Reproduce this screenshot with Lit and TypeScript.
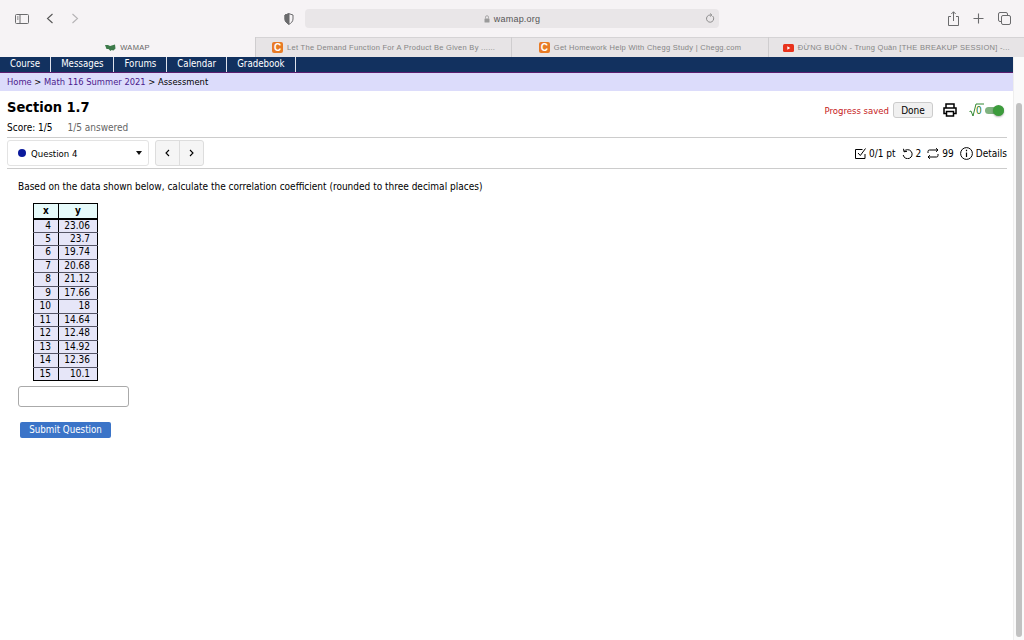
import { LitElement, css, html, svg } from "lit";
import { customElement } from "lit/decorators.js";

const ROWS: [number, string][] = [
  [4, "23.06"],
  [5, "23.7"],
  [6, "19.74"],
  [7, "20.68"],
  [8, "21.12"],
  [9, "17.66"],
  [10, "18"],
  [11, "14.64"],
  [12, "12.48"],
  [13, "14.92"],
  [14, "12.36"],
  [15, "10.1"],
];

const NAV = ["Course", "Messages", "Forums", "Calendar", "Gradebook"];

const icon = (w: number, h: number, body: unknown, cls = "") => html`<svg
  class=${cls}
  width=${w}
  height=${h}
  viewBox="0 0 ${w} ${h}"
  fill="none"
  stroke="currentColor"
>
  ${body}
</svg>`;

const cheggIcon = () => html`<span class="chegg">C</span>`;

@customElement("app-root")
export class AppRoot extends LitElement {
  private renderToolbar() {
    return html`
      <div class="toolbar">
        <div class="tool-left">
          ${icon(
            14,
            10,
            svg`<rect x=".5" y=".5" width="13" height="9" rx="1"/><path d="M5 .5v9M2 3h1.500M2 5h1.500"/>`,
            "sidebar",
          )}
          ${icon(8, 11, svg`<path d="M6.500 1 1.500 5.500l5 4.500" stroke-width="1.100"/>`, "back")}
          ${icon(8, 11, svg`<path d="M1.500 1l5 4.500-5 4.500" stroke-width="1.100"/>`, "forward")}
        </div>
        ${icon(
          10,
          12,
          svg`<path d="M5 .7 9 2v4c0 2.500-2 4.300-4 5.300C3 10.300 1 8.500 1 6V2z" stroke-width="1"/><path d="M5 .7 1 2v4c0 2.500 2 4.300 4 5.300z" fill="currentColor"/>`,
          "shield",
        )}
        <div class="url">
          <span class="url-text">
            ${icon(
              6,
              8,
              svg`<rect x=".5" y="3.500" width="5" height="4" rx=".6" fill="currentColor" stroke="none"/><path d="M1.500 3.500V2.200a1.500 1.500 0 0 1 3 0v1.300" stroke-width=".8"/>`,
            )}
            wamap.org
          </span>
          ${icon(
            10,
            11,
            svg`<path d="M7.600 3A3.600 3.600 0 1 1 5 2H6.500M5.200.5 6.800 2 5.200 3.500" stroke-width=".8"/>`,
            "reload",
          )}
        </div>
        <div class="tool-right">
          ${icon(
            11,
            15,
            svg`<path d="M3 5.500H.5v9h10v-9H8M5.500 10V.8M3.300 3 5.500.8 7.700 3"/>`,
          )}
          ${icon(11, 11, svg`<path d="M5.500.5v10M.5 5.500h10" stroke-width="1.100"/>`)}
          ${icon(
            13,
            13,
            svg`<rect x="3.500" y="3.500" width="9" height="9" rx="1.500"/><path d="M3.500 9.500H2A1.500 1.500 0 0 1 .5 8V2A1.500 1.500 0 0 1 2 .5h6A1.500 1.500 0 0 1 9.500 2v1.500"/>`,
          )}
        </div>
      </div>
    `;
  }

  private renderTabs() {
    return html`
      <div class="tabs">
        <div class="tab active">
          <svg class="fav" width="11" height="8" viewBox="0 0 11 8">
            <path d="M0 1h3l2 1 5-1.500.5 4-2 2-2-.5-1 1-2-2-2 0z" fill="#3d7a4a" />
          </svg>
          <span>WAMAP</span>
        </div>
        <div class="tab">
          ${cheggIcon()}<span>Let The Demand Function For A Product Be Given By ......</span>
        </div>
        <div class="tab">
          ${cheggIcon()}<span>Get Homework Help With Chegg Study | Chegg.com</span>
        </div>
        <div class="tab">
          <svg class="fav" width="11" height="8" viewBox="0 0 11 8">
            <rect width="11" height="8" rx="1.500" fill="#e8321c" />
            <path d="M4.300 2.200v3.600l3-1.800z" fill="#fff" />
          </svg>
          <span>ĐỪNG BUỒN - Trung Quân [THE BREAKUP SESSION] -...</span>
        </div>
      </div>
    `;
  }

  private renderTable() {
    return html`
      <table>
        <thead>
          <tr><th>x</th><th>y</th></tr>
        </thead>
        <tbody>
          ${ROWS.map(
            ([x, y]) => html`<tr><td>${x}</td><td>${y}</td></tr>`,
          )}
        </tbody>
      </table>
    `;
  }

  render() {
    return html`
      ${this.renderToolbar()} ${this.renderTabs()}
      <div class="viewport">
        <div class="page">
          <nav>
            ${NAV.map((n) => html`<span class="nav-item">${n}</span>`)}
          </nav>
          <div class="crumbs">
            <span class="link">Home</span> &gt;
            <span class="link">Math 116 Summer 2021</span> &gt; Assessment
          </div>
          <div class="head">
            <div>
              <h1>Section 1.7</h1>
              <div class="score">Score: 1/5 <span class="answered">1/5 answered</span></div>
            </div>
            <div class="head-right">
              <span class="saved">Progress saved</span>
              <span class="done">Done</span>
              ${icon(
                14,
                14,
                svg`<path d="M3 5V1h8v4M3 10.500H1V5h12v5.500h-2" stroke-width="1.500"/><rect x="3.500" y="8.500" width="7" height="4.500" stroke-width="1.500"/>`,
                "printer",
              )}
              <span class="sqrt">
                ${icon(
                  15,
                  14,
                  svg`<path d="M.5 8.500 2 8l2 5 3-12h8" stroke-width=".9"/>`,
                )}
                <span class="zero">0</span>
              </span>
              <span class="switch"><span class="knob"></span></span>
            </div>
          </div>
          <div class="qbar">
            <div class="select">
              <span class="dot"></span>
              <span class="qname">Question 4</span>
              <span class="caret"></span>
            </div>
            <div class="pager">
              <span class="pg">${icon(5, 8, svg`<path d="M4 1 1 4l3 3" stroke-width="1.100"/>`)}</span>
              <span class="pg">${icon(5, 8, svg`<path d="M1 1l3 3-3 3" stroke-width="1.100"/>`)}</span>
            </div>
            <div class="stats">
              <span class="stat">
                ${icon(
                  11,
                  11,
                  svg`<path d="M10 6v4.500H.5V1.500h7" /><path d="M3 5l2.300 2.500L10.500.5"/>`,
                )}
                0/1 pt
              </span>
              <span class="stat">
                ${icon(
                  11,
                  11,
                  svg`<path d="M2 3.500A4.500 4.500 0 1 1 1.200 7M1.500.8 2 3.800 5 3.300"/>`,
                )}
                2
              </span>
              <span class="stat">
                ${icon(
                  12,
                  11,
                  svg`<path d="M1 5V3.500A1.500 1.500 0 0 1 2.500 2H11M9 .2 11 2 9 3.800M11 6v1.500A1.500 1.500 0 0 1 9.500 9H1M3 7.200 1 9l2 1.800"/>`,
                )}
                99
              </span>
              <span class="stat details">
                ${icon(
                  13,
                  13,
                  svg`<circle cx="6.500" cy="6.500" r="5.900"/><path d="M6.500 5.500v4.500M6.500 2.800v1.400" stroke-width="1.200"/>`,
                )}
                Details
              </span>
            </div>
          </div>
          <div class="question">
            <p>
              Based on the data shown below, calculate the correlation
              coefficient (rounded to three decimal places)
            </p>
            ${this.renderTable()}
            <div class="answer"></div>
            <span class="submit">Submit Question</span>
          </div>
        </div>
        <div class="scrollbar"><div class="thumb"></div></div>
      </div>
    `;
  }

  static styles = css`
    :host {
      display: block;
      width: 1024px;
      height: 640px;
      overflow: hidden;
      background: #fff;
      font-family: "DejaVu Sans Condensed", "DejaVu Sans", sans-serif;
      font-stretch: condensed;
      color: #000;
    }

    svg {
      display: block;
      flex: none;
    }

    .toolbar {
      height: 37px;
      background: #f6f3f5;
      display: flex;
      align-items: center;
      color: #6b6b6d;
      position: relative;
    }

    .tool-left {
      display: flex;
      align-items: center;
      padding-left: 15px;
      width: 284px;
      box-sizing: border-box;
    }

    .back {
      margin-left: 17px;
      color: #555;
    }

    .forward {
      margin-left: 17px;
      color: #b5b3b5;
    }

    .shield {
      color: #6a6a6c;
    }

    .url {
      margin-left: 11px;
      width: 414px;
      height: 19px;
      background: #e9e6e8;
      border-radius: 4px;
      display: flex;
      align-items: center;
      justify-content: center;
      position: relative;
    }

    .url-text {
      display: flex;
      align-items: center;
      gap: 4px;
      color: #555;
      font: 9px "Liberation Sans", sans-serif;
      letter-spacing: 0.2px;
    }

    .url-text svg {
      color: #9a9a9a;
    }

    .reload {
      position: absolute;
      right: 4px;
      top: 4px;
      color: #777;
    }

    .tool-right {
      margin-left: auto;
      display: flex;
      align-items: center;
      gap: 14px;
      padding-right: 13px;
    }

    .tabs {
      height: 20px;
      display: flex;
      background: #e7e4e6;
      font: 7.500px "Liberation Sans", sans-serif;
      font-stretch: normal;
      letter-spacing: 0.280px;
      color: #858585;
      box-shadow: inset 0 1px 0 #d5d3d5;
    }

    .tab {
      flex: 1;
      display: flex;
      align-items: center;
      justify-content: center;
      gap: 4px;
      border-left: 1px solid #cfcdcf;
      padding-top: 1px;
      white-space: nowrap;
      min-width: 0;
    }

    .tab.active {
      background: #f6f3f5;
      border-left: none;
      color: #666;
      flex: none;
      width: 255px;
    }

    .chegg {
      width: 11px;
      height: 11px;
      background: #e87b25;
      border-radius: 2px;
      color: #fff;
      font: bold 10px/11px "Liberation Sans", sans-serif;
      text-align: center;
      letter-spacing: 0;
    }

    .viewport {
      display: flex;
      height: 583px;
    }

    .page {
      width: 1013px;
      flex: none;
      font-size: 10px;
    }

    .scrollbar {
      flex: 1;
      background: #fafafa;
      border-left: 1px solid #eee;
      padding: 46px 2px 0;
    }

    .thumb {
      height: 534px;
      background: #c1c1c1;
      border-radius: 3px;
    }

    nav {
      height: 16px;
      box-sizing: border-box;
      background: #12315f;
      border-bottom: 1px solid #5c1f6e;
      display: flex;
      color: #fff;
      font-size: 9.600px;
      line-height: 14px;
    }

    .nav-item {
      padding: 0 10px;
      border-right: 1px solid #dfe3ec;
    }

    .crumbs {
      height: 18px;
      line-height: 18px;
      background: #dcdcfb;
      padding-left: 7px;
      font-size: 9.300px;
    }

    .link {
      color: #4b1a8c;
    }

    .head {
      display: flex;
      justify-content: space-between;
      padding: 7px 7px 0;
      height: 39px;
    }

    h1 {
      margin: 0;
      font-size: 14.500px;
      line-height: 18px;
      font-weight: 700;
    }

    .score {
      margin-top: 6px;
      line-height: 11px;
    }

    .answered {
      color: #666;
      margin-left: 12px;
    }

    .head-right {
      display: flex;
      align-items: center;
      height: 24px;
      margin-right: 2px;
    }

    .saved {
      color: #c62121;
      font-size: 9.500px;
    }

    .done {
      margin-left: 4px;
      width: 40px;
      height: 16px;
      line-height: 15px;
      text-align: center;
      background: #f0f0f0;
      border: 1px solid #ccc;
      border-radius: 3px;
      box-sizing: border-box;
    }

    .printer {
      margin-left: 10px;
    }

    .sqrt {
      margin-left: 12px;
      display: flex;
      position: relative;
      color: #1c7a1c;
    }

    .zero {
      position: absolute;
      left: 7px;
      top: 2px;
      font-size: 10px;
    }

    .switch {
      width: 19px;
      height: 7px;
      margin-left: 1px;
      background: #7fb27f;
      border-radius: 4px;
      position: relative;
    }

    .knob {
      position: absolute;
      right: 0;
      top: -2px;
      width: 11px;
      height: 11px;
      border-radius: 50%;
      background: #3c9c3c;
      box-shadow: 0 1px 2px rgba(0, 0, 0, 0.3);
    }

    .qbar {
      margin: 0 6px 0 7px;
      height: 32px;
      box-sizing: border-box;
      border-top: 1px solid #ccc;
      border-bottom: 1px solid #ccc;
      display: flex;
      align-items: center;
    }

    .select {
      width: 142px;
      height: 26px;
      box-sizing: border-box;
      border: 1px solid #e3e3e3;
      border-radius: 3px;
      display: flex;
      align-items: center;
      padding: 0 6px 0 10px;
      font-size: 9.500px;
    }

    .dot {
      width: 8px;
      height: 8px;
      border-radius: 50%;
      background: #0b1a9c;
      margin-right: 5px;
    }

    .caret {
      margin-left: auto;
      border-left: 3px solid transparent;
      border-right: 3px solid transparent;
      border-top: 4px solid #111;
    }

    .pager {
      margin-left: 6px;
      display: flex;
      height: 26px;
      box-sizing: border-box;
      border: 1px solid #ddd;
      border-radius: 3px;
      background: #f5f5f5;
    }

    .pg {
      width: 23px;
      display: flex;
      align-items: center;
      justify-content: center;
    }

    .pg + .pg {
      border-left: 1px solid #ddd;
    }

    .stats {
      margin-left: auto;
      display: flex;
      align-items: center;
      gap: 6px;
    }

    .stat {
      display: flex;
      align-items: center;
      gap: 3px;
    }

    .question {
      padding: 0 0 0 18px;
    }

    p {
      margin: 11px 0 0;
      line-height: 14px;
    }

    table {
      margin: 9px 0 0 15px;
      border-collapse: collapse;
      border: 1px solid #000;
      table-layout: fixed;
      width: 65px;
    }

    th,
    td {
      height: 13.500px;
      box-sizing: border-box;
      padding: 0 7px 0 0;
      line-height: 12px;
      text-align: right;
      border-left: 1px solid #000;
      border-bottom: 1px solid #556;
    }

    th {
      height: 15px;
      padding: 0;
      background: #e6fafa;
      text-align: center;
      font-weight: 700;
      border-bottom: 2px solid #000;
    }

    td {
      background: #e6e6f8;
    }

    th:first-child {
      width: 25px;
    }

    tr:last-child td {
      border-bottom: 1px solid #000;
    }

    .answer {
      margin-top: 5px;
      width: 111px;
      height: 21px;
      box-sizing: border-box;
      border: 1px solid #aaa;
      border-radius: 3px;
    }

    .submit {
      display: block;
      margin: 15px 0 0 2px;
      width: 91px;
      height: 16px;
      line-height: 16px;
      text-align: center;
      color: #fff;
      background: #3b74c8;
      border-radius: 2px;
      box-sizing: border-box;
      font-size: 9.700px;
    }
  `;
}

declare global {
  interface HTMLElementTagNameMap {
    "app-root": AppRoot;
  }
}
